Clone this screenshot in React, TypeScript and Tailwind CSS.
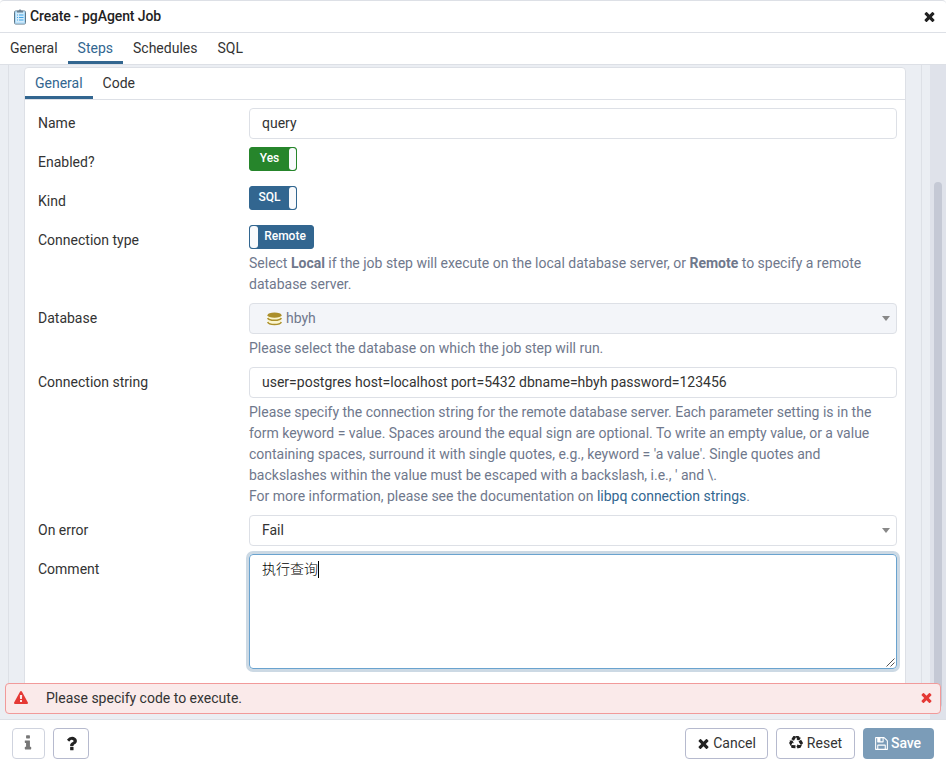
import type { ReactNode } from "react";

const iconPaths = {
  times:
    "M1490 1322q0 40-28 68l-136 136q-28 28-68 28t-68-28l-294-294-294 294q-28 28-68 28t-68-28l-136-136q-28-28-28-68t28-68l294-294-294-294q-28-28-28-68t28-68l136-136q28-28 68-28t68 28l294 294 294-294q28-28 68-28t68 28l136 136q28 28 28 68t-28 68l-294 294 294 294q28 28 28 68z",
  info: "M1216 1344v128q0 26-19 45t-45 19h-512q-26 0-45-19t-19-45v-128q0-26 19-45t45-19h64v-384h-64q-26 0-45-19t-19-45v-128q0-26 19-45t45-19h384q26 0 45 19t19 45v576h64q26 0 45 19t19 45zm-128-1152v192q0 26-19 45t-45 19h-256q-26 0-45-19t-19-45v-192q0-26 19-45t45-19h256q26 0 45 19t19 45z",
  question:
    "M1088 1256v240q0 16-12 28t-28 12h-240q-16 0-28-12t-12-28v-240q0-16 12-28t28-12h240q16 0 28 12t12 28zm316-600q0 54-15.500 101t-35 76.500-55 59.500-57.500 43.500-61 35.500q-41 23-68.500 65t-27.500 67q0 17-12 32.500t-28 15.500h-240q-15 0-25.500-18.500t-10.500-37.500v-45q0-83 65-156.500t143-108.500q59-27 84-56t25-76q0-42-46.500-74t-107.500-32q-65 0-108 29-35 25-107 115-13 16-31 16-12 0-25-8l-164-125q-13-10-15.500-25t5.500-28q160-266 464-266 80 0 161 31t146 83 106 127.500 41 158.500z",
  warning:
    "M1024 1375v-190q0-14-9.500-23.500t-22.500-9.500h-192q-13 0-22.500 9.500t-9.500 23.500v190q0 14 9.500 23.500t22.500 9.500h192q13 0 22.500-9.500t9.500-23.500zm-2-374l18-459q0-12-10-19-13-11-24-11h-220q-11 0-24 11-10 7-10 21l17 457q0 10 10 16.500t24 6.500h185q14 0 23.500-6.500t10.500-16.500zm-14-934l768 1408q35 63-2 126-17 29-46.500 46t-63.500 17h-1536q-34 0-63.500-17t-46.500-46q-37-63-2-126l768-1408q17-31 47-49t65-18 65 18 47 49z",
  save: "M512 1536h768v-384h-768v384zm896 0h128v-896q0-14-10-38.500t-20-34.500l-281-281q-10-10-34-20t-39-10v416q0 40-28 68t-68 28h-576q-40 0-68-28t-28-68v-416h-128v1280h128v-416q0-40 28-68t68-28h832q40 0 68 28t28 68v416zm-384-928v-320q0-13-9.500-22.500t-22.500-9.500h-192q-13 0-22.500 9.500t-9.500 22.500v320q0 13 9.500 22.500t22.500 9.500h192q13 0 22.500-9.500t9.500-22.500zm640 32v928q0 40-28 68t-68 28h-1344q-40 0-68-28t-28-68v-1344q0-40 28-68t68-28h928q40 0 88 20t76 48l280 280q28 28 48 76t20 88z",
  recycle:
    "M836 1169l-15 368-2 22-420-29q-36-3-67-31.500t-47-65.500q-11-27-14.500-55t4-65 12-55 21.500-64 19-53q78 12 509 28zm-387-586l180 379-147-92q-63 72-111.500 144.500t-72.500 125-39.500 94.500-18.500 63l-4 21-190-357q-17-26-18-56t6-47l8-18q35-63 114-188l-140-86zm1231 517l-188 359q-12 29-36.500 46.500t-43.500 20.500l-18 4q-71 7-219 12l8 164-230-367 211-362 7 173q170 16 283 5t170-33zm-785-924q-47 63-265 435l-317-187-19-12 225-356q20-31 60-45t80-10q24 2 48.500 12t42 21 41.500 33 36 34.500 36 39.500 32 35zm655 307l212 363q18 37 12.500 76t-27.500 74q-13 20-33 37t-38 28-48.500 22-47 16-51.500 14-46 12q-34-72-265-436l313-195zm-143-226l142-83-220 373-419-20 151-86q-34-89-75-166t-75.500-123.500-64.500-80-47-46.500l-17-13 405 1q31-3 58 10.500t39 28.500l11 15q39 61 112 190z",
};

function Icon({
  name,
  className = "size-[14px]",
}: {
  name: keyof typeof iconPaths;
  className?: string;
}) {
  return (
    <svg viewBox="0 0 1792 1792" fill="currentColor" className={`shrink-0 ${className}`}>
      <path d={iconPaths[name]} />
    </svg>
  );
}

function JobIcon() {
  return (
    <svg width="12" height="16" viewBox="0 0 12 16" className="shrink-0">
      <rect x="0.5" y="2" width="11" height="13" rx="1.2" fill="#d5ecfb" stroke="#5d7688" />
      <rect x="1.5" y="3" width="9" height="11" fill="none" stroke="#a9d9f7" strokeWidth="1" />
      <path d="M3 3.5V1.8h1.6a1.4 1.4 0 0 1 2.8 0H9v1.7z" fill="#6b8191" />
      <path d="M3 6h1M3 8.5h1M3 11h1M5 6h4.5M5 8.5h4.5M5 11h4.5" stroke="#3fa4e6" strokeWidth="1.1" />
    </svg>
  );
}

function DatabaseIcon() {
  return (
    <svg width="15" height="14" viewBox="0 0 15 14">
      <path d="M.7 3v7.6c0 1.4 3 2.4 6.8 2.4s6.8-1 6.8-2.4V3z" fill="#fbf6cf" />
      <ellipse cx="7.5" cy="3.2" rx="7" ry="2.6" fill="#ab8f2c" />
      <path
        d="M.7 5.9c1 3.1 12.600 3.100 13.600 0M.7 10c1 3.400 12.600 3.400 13.600 0"
        fill="none"
        stroke="#ab8f2c"
        strokeWidth="1.5"
      />
    </svg>
  );
}

function Tab({ label, active }: { label: string; active?: boolean }) {
  return (
    <div
      className={
        active
          ? "border-b-[3px] border-[#326690] px-[10px] pt-[5px] text-[#326690]"
          : "px-[10px] pt-[5px]"
      }
    >
      {label}
    </div>
  );
}

function Row({ label, help, children }: { label: string; help?: ReactNode; children: ReactNode }) {
  return (
    <div className="flex min-h-[31px] shrink-0">
      <div className="w-[211px] shrink-0 pt-[5px]">{label}</div>
      <div className="min-w-0 flex-1">
        {children}
        {help && <div className="mt-1 tracking-[-0.005px] text-[#6f788c]">{help}</div>}
      </div>
    </div>
  );
}

function Field({ children }: { children: ReactNode }) {
  return (
    <div className="h-[31px] rounded border border-[#dde0e6] px-3 leading-[29px]">{children}</div>
  );
}

function Select({ disabled, children }: { disabled?: boolean; children: ReactNode }) {
  return (
    <div
      className={
        disabled
          ? "flex h-[31px] items-center justify-between rounded border border-[#dde0e6] bg-[#f3f5f9] pr-[6px] pl-[17px] text-[#6f788c]"
          : "flex h-[31px] items-center justify-between rounded border border-[#dde0e6] pr-[6px] pl-3"
      }
    >
      <div className="flex items-center gap-1">{children}</div>
      <div className="border-x-4 border-t-[5px] border-x-transparent border-t-[#888]" />
    </div>
  );
}

export default function App() {
  return (
    <div className="flex h-[767px] w-[946px] flex-col overflow-hidden rounded-[4px] border-t border-[#dde0e6] bg-white font-['Roboto','Noto_Sans_CJK_SC',sans-serif] text-[14px] leading-[21px] text-[#333]">
      <header className="flex h-8 shrink-0 items-center border-b border-[#dde0e6] pr-[9px] pl-[14px] text-[#222]">
        <JobIcon />
        <span className="ml-1 font-medium tracking-[-0.09px]">Create - pgAgent Job</span>
        <Icon name="times" className="mb-px ml-auto size-[15px]" />
      </header>
      <nav className="flex h-8 shrink-0 border-b border-[#dde0e6]">
        <Tab label="General" />
        <Tab label="Steps" active />
        <Tab label="Schedules" />
        <Tab label="SQL" />
      </nav>

      <main className="relative flex h-[654px] shrink-0 overflow-hidden bg-[#ebeef3]">
        <div className="ml-2 h-[640px] w-[914px] overflow-hidden border-x border-[#dde0e6] pt-[2px] pr-[15px] pl-[15px]">
          <section className="flex h-[700px] flex-col rounded-t border border-[#dde0e6] bg-white">
            <nav className="flex h-8 shrink-0 border-b border-[#dde0e6]">
              <Tab label="General" active />
              <Tab label="Code" />
            </nav>
            <div className="flex flex-col gap-2 py-2 pr-2 pl-[13px]">
              <Row label="Name">
                <Field>query</Field>
              </Row>
              <Row label="Enabled?">
                <div className="flex h-6 w-12 rounded-[3px] border border-[#26852b] bg-[#26852b] text-[12px] font-medium text-white">
                  <span className="flex-1 text-center leading-5">Yes</span>
                  <span className="w-[7px] rounded-[3px] bg-[#f9fafc]" />
                </div>
              </Row>
              <Row label="Kind">
                <div className="flex h-6 w-12 rounded-[3px] border border-[#326690] bg-[#326690] text-[12px] font-medium text-white">
                  <span className="flex-1 text-center leading-5">SQL</span>
                  <span className="w-[7px] rounded-[3px] bg-[#f9fafc]" />
                </div>
              </Row>
              <Row
                label="Connection type"
                help={
                  <>
                    Select <b className="font-bold">Local</b> if the job step will execute on the local
                    database server, or <b className="font-bold">Remote</b> to specify a remote database
                    server.
                  </>
                }
              >
                <div className="flex h-6 w-[65px] rounded-[3px] border border-[#326690] bg-[#326690] pr-px text-[12px] font-medium text-white">
                  <span className="w-2 rounded-[3px] bg-[#f9fafc]" />
                  <span className="flex-1 text-center leading-5">Remote</span>
                </div>
              </Row>
              <Row label="Database" help="Please select the database on which the job step will run.">
                <Select disabled>
                  <DatabaseIcon />
                  hbyh
                </Select>
              </Row>
              <Row
                label="Connection string"
                help={
                  <>
                    Please specify the connection string for the remote database server. Each parameter
                    setting is in the form keyword = value. Spaces around the equal sign are optional. To
                    write an empty value, or a value containing spaces, surround it with single quotes,
                    e.g., keyword = 'a value'. Single quotes and backslashes within the value must be
                    escaped with a backslash, i.e., ' and \.
                    <br />
                    For more information, please see the documentation on{" "}
                    <span className="text-[#326690]">libpq connection strings</span>.
                  </>
                }
              >
                <Field>user=postgres host=localhost port=5432 dbname=hbyh password=123456</Field>
              </Row>
              <Row label="On error">
                <Select>Fail</Select>
              </Row>
              <Row label="Comment">
                <div className="flex h-[115px] justify-between rounded border border-[#6aa3cf] pt-1 pl-3 shadow-[0_0_0_3px_#ccd9e4]">
                  <div className="flex items-start font-light text-black">
                    执行查询
                    <span className="mt-[2px] h-[17px] w-px bg-black" />
                  </div>
                  <svg width="10" height="10" viewBox="0 0 10 10" className="self-end">
                    <path d="M.5 8.5l8-8M4.5 8.5l4-4" stroke="#555" fill="none" />
                  </svg>
                </div>
              </Row>
            </div>
          </section>
        </div>
        <div className="ml-2 w-4 bg-[#dfe2ea] px-1 pt-[117px]">
          <div className="h-[526px] rounded-full bg-[#c5c9d5]" />
        </div>
        <div className="absolute top-[618px] left-[5px] flex h-[31px] w-[936px] items-center rounded border border-[#f19a9a] bg-[#faeaea] pr-[6px] pl-2">
          <Icon name="warning" className="mb-px size-[14px] text-[#e53935]" />
          <span className="ml-[18px]">Please specify code to execute.</span>
          <Icon name="times" className="mb-[2px] ml-auto size-[15px] text-[#e53935]" />
        </div>
      </main>

      <footer className="flex h-12 shrink-0 items-start gap-2 border-t border-[#dde0e6] px-3 pt-2">
        <button className="flex h-[31px] w-[33px] items-center justify-center rounded border border-[#cfd3de] pr-px text-[#777]">
          <Icon name="info" className="mb-px size-[18px]" />
        </button>
        <button className="flex h-[31px] w-9 items-center justify-center rounded border border-[#b6bace] text-[#222]">
          <Icon name="question" className="size-[19px]" />
        </button>
        <button className="ml-auto flex h-[31px] w-[83px] items-center justify-center gap-[2px] rounded border border-[#b6bace] pr-px">
          <Icon name="times" className="mb-px size-[15px] text-[#222]" />
          Cancel
        </button>
        <button className="flex h-[31px] w-[79px] items-center justify-center gap-1 rounded border border-[#b6bace]">
          <Icon name="recycle" className="mb-px size-[14px] text-[#222]" />
          Reset
        </button>
        <button className="flex h-[31px] w-[71px] items-center justify-center gap-[2px] rounded bg-[#7b9cb8] pr-[2px] text-white">
          <Icon name="save" className="size-[15px]" />
          <span className="font-medium tracking-[-0.1px]">Save</span>
        </button>
      </footer>
    </div>
  );
}
